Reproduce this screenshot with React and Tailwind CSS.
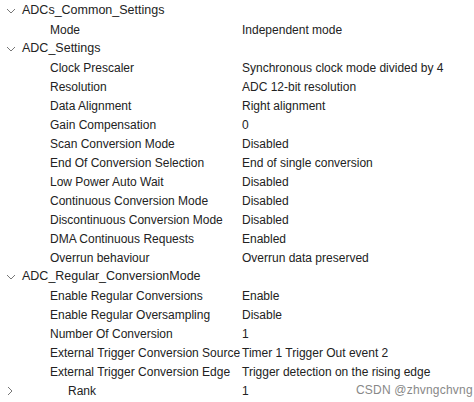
import React from 'react';

const groups = [
  {
    name: 'ADCs_Common_Settings',
    items: [['Mode', 'Independent mode']],
  },
  {
    name: 'ADC_Settings',
    items: [
      ['Clock Prescaler', 'Synchronous clock mode divided by 4'],
      ['Resolution', 'ADC 12-bit resolution'],
      ['Data Alignment', 'Right alignment'],
      ['Gain Compensation', '0'],
      ['Scan Conversion Mode', 'Disabled'],
      ['End Of Conversion Selection', 'End of single conversion'],
      ['Low Power Auto Wait', 'Disabled'],
      ['Continuous Conversion Mode', 'Disabled'],
      ['Discontinuous Conversion Mode', 'Disabled'],
      ['DMA Continuous Requests', 'Enabled'],
      ['Overrun behaviour', 'Overrun data preserved'],
    ],
  },
  {
    name: 'ADC_Regular_ConversionMode',
    items: [
      ['Enable Regular Conversions', 'Enable'],
      ['Enable Regular Oversampling', 'Disable'],
      ['Number Of Conversion', '1'],
      ['External Trigger Conversion Source', 'Timer 1 Trigger Out event 2'],
      ['External Trigger Conversion Edge', 'Trigger detection on the rising edge'],
    ],
  },
];

function Chevron({ open }) {
  return (
    <svg width="10" height="10" viewBox="0 0 10 10" className="text-[#777]">
      {open ? (
        <path d="M1 3 L5 7 L9 3" fill="none" stroke="currentColor" strokeWidth="1" />
      ) : (
        <path d="M3 1 L7 5 L3 9" fill="none" stroke="currentColor" strokeWidth="1" />
      )}
    </svg>
  );
}

function Row({ label, value }) {
  return (
    <div className="flex h-[19px] items-center">
      <div className="w-[242px] shrink-0 whitespace-nowrap pl-[50px]">{label}</div>
      <div className="whitespace-nowrap">{value}</div>
    </div>
  );
}

export default function App() {
  return (
    <div className="relative w-[474px] h-[402px] bg-white overflow-hidden text-[12px] text-[#222] pt-[1px]" style={{ fontFamily: '"Liberation Sans", Arial, sans-serif' }}>
      {groups.map((g) => (
        <div key={g.name}>
          <div className="flex h-[19px] items-center">
            <div className="w-[22px] pl-[6px] flex items-center">
              <Chevron open />
            </div>
            <span className="text-[12.5px]">{g.name}</span>
          </div>
          {g.items.map(([l, v]) => (
            <Row key={l} label={l} value={v} />
          ))}
        </div>
      ))}
      <div className="flex h-[19px] items-center">
        <div className="w-[68px] shrink-0 pl-[5px] flex items-center">
          <Chevron />
        </div>
        <div className="w-[174px] shrink-0">Rank</div>
        <div>1</div>
      </div>
      <div className="absolute left-[356px] top-[381px] text-[12px] text-[#888] tracking-[0.2px]">CSDN @zhvngchvng</div>
    </div>
  );
}
